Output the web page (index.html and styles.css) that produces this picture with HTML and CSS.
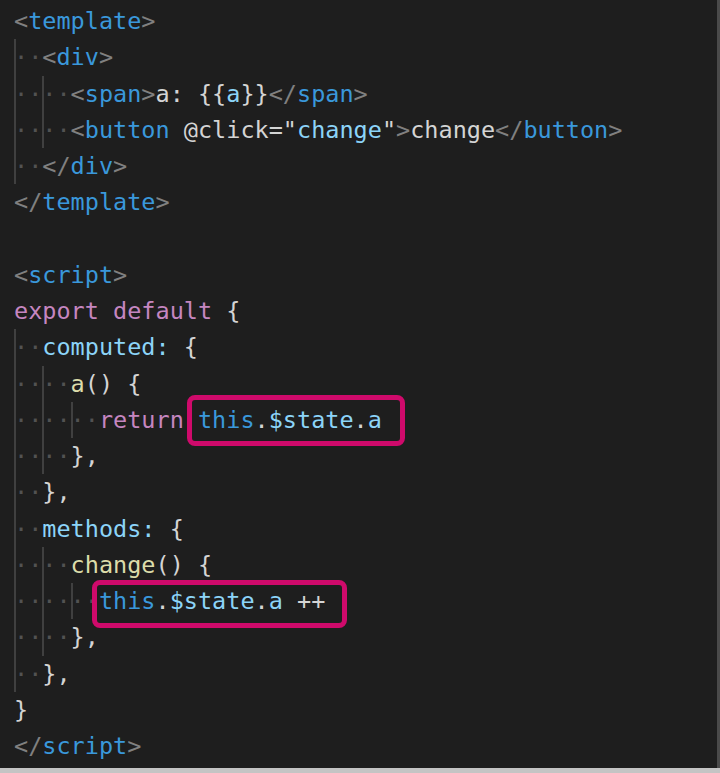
FILE: index.html
```html
<!DOCTYPE html>
<html>
<head>
<meta charset="utf-8">
<link rel="stylesheet" href="styles.css">
</head>
<body>
<div class="frame">
<div class="editor">
<div class="ln"><span class="p">&lt;</span><span class="t">template</span><span class="p">&gt;</span></div>
<div class="ln"><span class="g">··</span><span class="p">&lt;</span><span class="t">div</span><span class="p">&gt;</span></div>
<div class="ln"><span class="g">··</span><span class="g">··</span><span class="p">&lt;</span><span class="t">span</span><span class="p">&gt;</span><span class="w">a: {{</span><span class="v">a</span><span class="w">}}</span><span class="p">&lt;/</span><span class="t">span</span><span class="p">&gt;</span></div>
<div class="ln"><span class="g">··</span><span class="g">··</span><span class="p">&lt;</span><span class="t">button</span> <span class="w">@click="</span><span class="v">change</span><span class="w">"</span><span class="p">&gt;</span><span class="w">change</span><span class="p">&lt;/</span><span class="t">button</span><span class="p">&gt;</span></div>
<div class="ln"><span class="g">··</span><span class="p">&lt;/</span><span class="t">div</span><span class="p">&gt;</span></div>
<div class="ln"><span class="p">&lt;/</span><span class="t">template</span><span class="p">&gt;</span></div>
<div class="ln"> </div>
<div class="ln"><span class="p">&lt;</span><span class="t">script</span><span class="p">&gt;</span></div>
<div class="ln"><span class="k">export default</span><span class="w"> {</span></div>
<div class="ln"><span class="g">··</span><span class="v">computed:</span><span class="w"> {</span></div>
<div class="ln"><span class="g">··</span><span class="g">··</span><span class="f">a</span><span class="w">() {</span></div>
<div class="ln"><span class="g">··</span><span class="g">··</span><span class="g">··</span><span class="k">return</span> <span class="hl hl1"><span class="b">this</span><span class="w">.</span><span class="v">$state</span><span class="w">.</span><span class="v">a</span></span></div>
<div class="ln"><span class="g">··</span><span class="g">··</span><span class="w">},</span></div>
<div class="ln"><span class="g">··</span><span class="w">},</span></div>
<div class="ln"><span class="g">··</span><span class="v">methods:</span><span class="w"> {</span></div>
<div class="ln"><span class="g">··</span><span class="g">··</span><span class="f">change</span><span class="w">() {</span></div>
<div class="ln"><span class="g">··</span><span class="g">··</span><span class="g">··</span><span class="hl hl2"><span class="b">this</span><span class="w">.</span><span class="v">$state</span><span class="w">.</span><span class="v">a</span><span class="w"> ++</span></span></div>
<div class="ln"><span class="g">··</span><span class="g">··</span><span class="w">},</span></div>
<div class="ln"><span class="g">··</span><span class="w">},</span></div>
<div class="ln"><span class="w">}</span></div>
<div class="ln"><span class="p">&lt;/</span><span class="t">script</span><span class="p">&gt;</span></div>
</div>
</div>
</body>
</html>
```
FILE: styles.css
```css
html, body {
  margin: 0;
  padding: 0;
  background: #c4c4c4;
}
.frame {
  width: 717px;
  height: 768px;
  background: #1e1e1e;
  border-right: 3px solid #4a4a4a;
  overflow: hidden;
}
.editor {
  padding: 3px 0 0 14px;
  font-family: "DejaVu Sans Mono", "Liberation Mono", monospace;
  font-size: 23.5px;
  color: #d4d4d4;
}
.ln {
  height: 36.25px;
  line-height: 36.25px;
  white-space: pre;
}
.g {
  display: inline-block;
  color: #525252;
  box-shadow: inset 2px 0 0 #404040;
}
.p { color: #808080; }
.t { color: #3a98db; }
.w { color: #d4d4d4; }
.v { color: #8cd4f8; }
.k { color: #c586c0; }
.f { color: #dcdcaa; }
.b { color: #3a98db; }
.hl {
  position: relative;
}
.hl::before {
  content: "";
  position: absolute;
  border: 5px solid #cf0a6b;
  border-radius: 8px;
}
.hl1::before {
  left: -11px;
  right: -23px;
  top: -11px;
  bottom: -12px;
}
.hl2::before {
  left: -7px;
  right: -22px;
  top: -7px;
  bottom: -13px;
}
```
